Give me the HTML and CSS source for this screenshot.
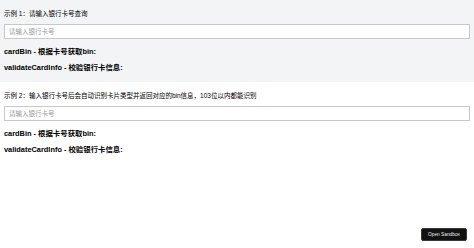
FILE: index.html
```html
<!DOCTYPE html>
<html lang="zh">
<head>
    <meta charset="UTF-8">
    <meta name="viewport" content="width=device-width, initial-scale=1.0">
    <title>银行卡校验示例</title>
    <link rel="stylesheet" href="styles.css">
</head>
<body>
    <div class="demo demo-gray">
        <p class="demo-title">示例 1：请输入银行卡号查询</p>
        <input class="demo-input" type="text" placeholder="请输入银行卡号">
        <h4 class="demo-result">cardBin - 根据卡号获取bin:</h4>
        <h4 class="demo-result">validateCardInfo - 校验银行卡信息:</h4>
    </div>

    <div class="demo">
        <p class="demo-title">示例 2：输入银行卡号后会自动识别卡片类型并返回对应的bin信息，103位以内都能识别</p>
        <input class="demo-input" type="text" placeholder="请输入银行卡号">
        <h4 class="demo-result">cardBin - 根据卡号获取bin:</h4>
        <h4 class="demo-result">validateCardInfo - 校验银行卡信息:</h4>
    </div>

    <a class="sandbox-btn" href="#">Open Sandbox</a>
</body>
</html>
```

FILE: styles.css
```css
body {
    margin: 0;
    font-family: 'Liberation Sans', Arial, 'Noto Sans CJK SC', sans-serif;
    color: #000;
    background: #fff;
}

.demo {
    padding: 8px 4px;
}

.demo-gray {
    background: #f3f4f6;
}

.demo-title {
    margin: 0 0 4px;
    font-size: 6.5px;
    line-height: 12px;
}

.demo-input {
    display: block;
    box-sizing: border-box;
    width: 100%;
    height: 15px;
    margin: 0 0 7px;
    padding: 0 4px;
    border: 1px solid #c8c8c8;
    background: #fff;
    font-family: inherit;
    font-size: 6.5px;
    outline: none;
}

.demo-input::placeholder {
    color: #9a9a9a;
}

.demo-result {
    margin: 0 0 4px;
    font-size: 7.4px;
    line-height: 12px;
    font-weight: bold;
}

.demo-result:last-child {
    margin-bottom: 0;
}

.sandbox-btn {
    position: fixed;
    right: 7px;
    bottom: 7px;
    width: 46px;
    height: 13px;
    box-sizing: border-box;
    display: flex;
    align-items: center;
    justify-content: center;
    background: #111;
    border: 1px solid #3a3a3a;
    border-radius: 2px;
    color: #eee;
    font-size: 4.8px;
    text-decoration: none;
}
```
